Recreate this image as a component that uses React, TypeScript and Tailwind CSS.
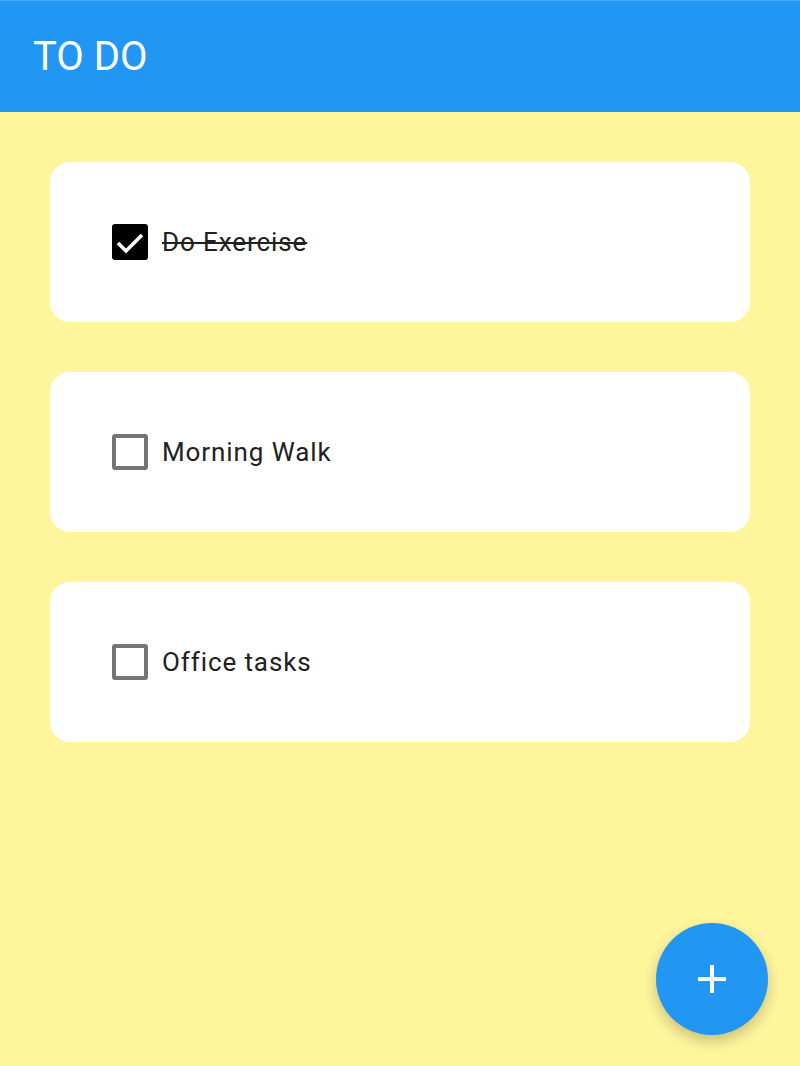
import { useState } from "react";

type Todo = { id: number; title: string; done: boolean };

const initialTodos: Todo[] = [
  { id: 1, title: "Do Exercise", done: true },
  { id: 2, title: "Morning Walk", done: false },
  { id: 3, title: "Office tasks", done: false },
];

const App = () => {
  const [todos, setTodos] = useState(initialTodos);

  const toggle = (id: number) =>
    setTodos((prev) =>
      prev.map((t) => (t.id === id ? { ...t, done: !t.done } : t))
    );

  return (
    <div className="relative flex min-h-[1066px] w-full flex-col bg-[#fff59d] font-['Roboto',sans-serif]">
      <header className="flex h-[112px] items-center border-t border-[#42a5f5] bg-[#2196f3] px-[33px]">
        <h1 className="text-[40px] leading-none text-white">TO DO</h1>
      </header>
      <main className="flex flex-col gap-[50px] px-[50px] pt-[50px]">
        {todos.map((todo) => (
          <div
            key={todo.id}
            className="flex h-[160px] items-center gap-[14px] rounded-[20px] bg-white pl-[62px]"
          >
            <button
              onClick={() => toggle(todo.id)}
              className={
                todo.done
                  ? "h-[36px] w-[36px] rounded-[3px] bg-black"
                  : "h-[36px] w-[36px] rounded-[3px] border-4 border-[#757575] bg-white"
              }
            >
              {todo.done && (
                <svg viewBox="0 0 36 36" className="h-[36px] w-[36px]">
                  <path
                    d="M6 19l8 8L30 11"
                    fill="none"
                    stroke="white"
                    strokeWidth="3.6"
                  />
                </svg>
              )}
            </button>
            <span
              className={
                todo.done
                  ? "text-[26px] tracking-[0.9px] text-[#212121] line-through decoration-[1.5px]"
                  : "text-[26px] tracking-[0.9px] text-[#212121]"
              }
            >
              {todo.title}
            </span>
          </div>
        ))}
      </main>
      <button className="absolute left-[656px] top-[923px] flex h-[112px] w-[112px] items-center justify-center rounded-full bg-[#2196f3] shadow-[0_6px_14px_rgba(0,0,0,0.22)]">
        <svg viewBox="0 0 28 28" className="h-[28px] w-[28px]">
          <path d="M14 0v28M0 14h28" stroke="white" strokeWidth="4" />
        </svg>
      </button>
    </div>
  );
};

export default App;
